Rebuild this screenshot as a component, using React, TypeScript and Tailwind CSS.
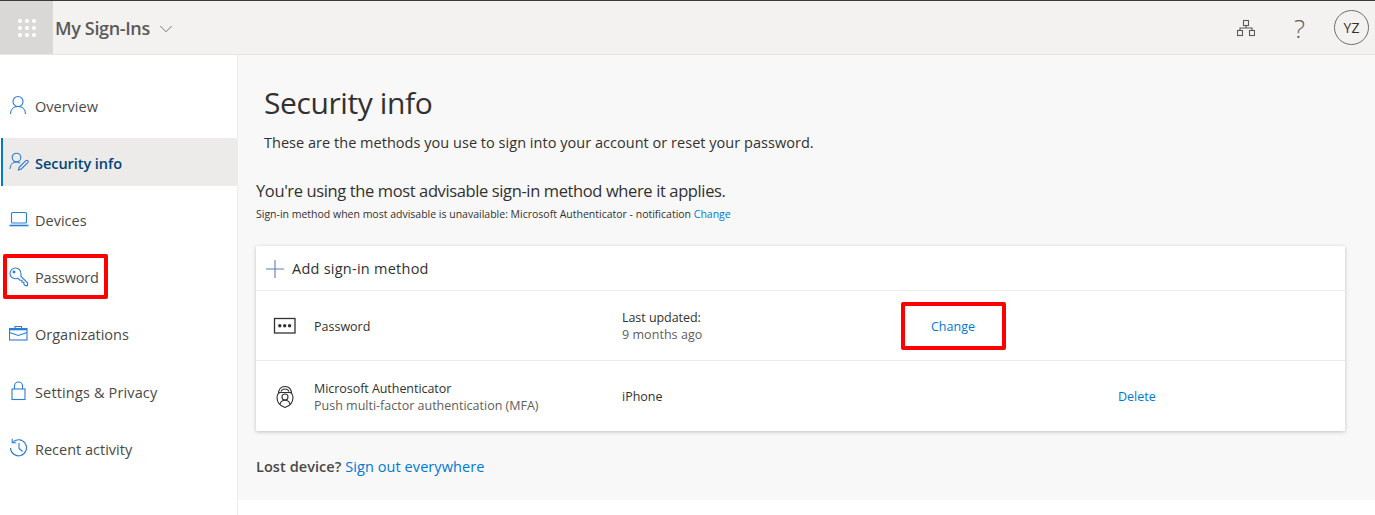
import { ChevronDown } from "lucide-react";
import type { ReactNode } from "react";

const stroke = { fill: "none", stroke: "currentColor", strokeWidth: 1.1 };

function OverviewIcon() {
  return (
    <svg width="20" height="20" viewBox="0 0 20 20" {...stroke}>
      <circle cx="9" cy="6.5" r="5" />
      <path d="M1.5 19c0-4.500 3-7.500 7.500-7.500s7.500 3 7.500 7.500" />
    </svg>
  );
}

function SecurityIcon() {
  return (
    <svg width="20" height="20" viewBox="0 0 20 20" {...stroke}>
      <circle cx="7.500" cy="5.500" r="4.300" />
      <path d="M1 17c0-4 2.500-7 6.500-7 1.500 0 2.700.4 3.700 1.100" />
      <path d="M9.500 18l.8-3 6.500-6.300c.7-.6 1.500-.6 2 0s.5 1.300-.1 1.900L12.300 17z" />
    </svg>
  );
}

function DevicesIcon() {
  return (
    <svg width="20" height="20" viewBox="0 0 20 20" {...stroke}>
      <rect x="2.500" y="3.500" width="15" height="10.500" rx="1" />
      <path d="M.5 16.500h19" strokeWidth="1.600" />
    </svg>
  );
}

function KeyIcon() {
  return (
    <svg width="20" height="20" viewBox="0 0 20 20" {...stroke}>
      <path d="M6.500 1C3.400 1 1 3.400 1 6.400s2.400 5.400 5.500 5.400c1 0 1.700-.2 2.400-.6l2 2h2v2h2v2l1.500 1.400H18.500v-2.800l-6.800-6.600c.3-.7.400-1.200.4-1.800C12.100 3.400 9.600 1 6.500 1z" />
      <circle cx="5" cy="5" r=".9" fill="currentColor" />
    </svg>
  );
}

function OrgIcon() {
  return (
    <svg width="20" height="20" viewBox="0 0 20 20" {...stroke}>
      <rect x=".500" y="4.500" width="17.500" height="11.500" />
      <path d="M6 4.500V2.500h6.500v2" />
      <path d="M.500 8.500l8.750 3 8.750-3" />
      <path d="M.500 5.500h17.500" strokeWidth="1.600" />
    </svg>
  );
}

function LockIcon() {
  return (
    <svg width="20" height="20" viewBox="0 0 20 20" {...stroke}>
      <rect x="3" y="8" width="13" height="10.500" />
      <path d="M5.500 8V5a4 4 0 0 1 8 0v3" />
    </svg>
  );
}

function HistoryIcon() {
  return (
    <svg width="20" height="20" viewBox="0 0 20 20" {...stroke}>
      <path d="M3.500 4.500A8 8 0 1 1 1.500 10" />
      <path d="M3.200 .8v4h4" />
      <path d="M10 5v5.500l3.500 3" />
    </svg>
  );
}

function OrgChartIcon() {
  return (
    <svg width="18" height="18" viewBox="0 0 18 18" fill="none" stroke="#5b5a58" strokeWidth="1.100">
      <rect x="6.500" y="1.500" width="5" height="5" />
      <rect x=".500" y="11.500" width="5" height="5" />
      <rect x="12.500" y="11.500" width="5" height="5" />
      <path d="M9 6.500v2.500M3 11.500V9h12v2.500" />
    </svg>
  );
}

function PlusIcon() {
  return (
    <svg width="18" height="18" viewBox="0 0 18 18" fill="none" stroke="#5f7cb0" strokeWidth="1.100">
      <path d="M9 0v18M0 9h18" />
    </svg>
  );
}

function PasswordIcon() {
  return (
    <svg width="24" height="18" viewBox="0 0 24 18" fill="none">
      <rect x="1.500" y="1.500" width="20.500" height="14.500" stroke="#323130" strokeWidth="1.300" />
      <circle cx="6.800" cy="8.700" r="1.700" fill="#323130" />
      <circle cx="11.700" cy="8.700" r="1.700" fill="#323130" />
      <circle cx="16.600" cy="8.700" r="1.700" fill="#323130" />
    </svg>
  );
}

function AuthenticatorIcon() {
  return (
    <svg width="20" height="24" viewBox="0 0 20 24" fill="none" stroke="#323130" strokeWidth="1.100">
      <path d="M3.500 9C3.500 4 6 1.500 10 1.500S16.500 4 16.500 9" />
      <path d="M6 6.500C6.800 4.800 8.200 4 10 4s3.200.8 4 2.500" />
      <path d="M2 12c0-2 1-3.500 2.500-4.500h11C17 8.500 18 10 18 12c0 5-3 9-8 10.500C5 21 2 17 2 12z" />
      <circle cx="10" cy="12" r="3" />
      <path d="M5 19c.8-2.500 2.700-3.700 5-3.700s4.200 1.200 5 3.700" />
    </svg>
  );
}

function Waffle() {
  return (
    <div className="grid grid-cols-3 gap-[3px]">
      {Array.from({ length: 9 }).map((_, i) => (
        <span key={i} className="size-[4px] rounded-full bg-white" />
      ))}
    </div>
  );
}

const NAV: { label: string; icon: ReactNode; tracking: string; active?: boolean }[] = [
  { label: "Overview", icon: <OverviewIcon />, tracking: "tracking-[0px]" },
  { label: "Security info", icon: <SecurityIcon />, tracking: "tracking-[-0.05px]", active: true },
  { label: "Devices", icon: <DevicesIcon />, tracking: "tracking-[0px]" },
  { label: "Password", icon: <KeyIcon />, tracking: "tracking-[-0.2px]" },
  { label: "Organizations", icon: <OrgIcon />, tracking: "tracking-[0px]" },
  { label: "Settings & Privacy", icon: <LockIcon />, tracking: "tracking-[0.15px]" },
  { label: "Recent activity", icon: <HistoryIcon />, tracking: "tracking-[0px]" },
];

export default function App() {
  return (
    <div className="relative flex h-[515px] w-[1375px] flex-col overflow-hidden bg-white font-['Open_Sans','Noto_Sans',sans-serif] text-[#323130]">
      <header className="flex h-[55px] shrink-0 items-center border-t border-b border-t-[#3b3a39] border-b-[#e6e5e3] bg-[#f3f2f1]">
        <div className="flex h-full w-[53px] items-center justify-center bg-[#d9d8d6]">
          <Waffle />
        </div>
        <span className="ml-[2px] pt-[2px] text-[18px] font-semibold tracking-[-0.35px] text-[#5b5a58]">My Sign-Ins</span>
        <ChevronDown className="ml-[5px] mt-[3px] size-[22px] text-[#605e5c]" strokeWidth={0.9} />
        <div className="ml-auto flex items-center">
          <OrgChartIcon />
          <span className="ml-[39px] text-[26px] font-light leading-none text-[#605e5c]">?</span>
          <div className="mr-[6px] ml-[29px] flex size-[35px] items-center justify-center rounded-full border border-[#6f6e6c] text-[14px] text-[#323130]">
            YZ
          </div>
        </div>
      </header>

      <div className="flex min-h-0 flex-1">
        <nav className="flex w-[238px] shrink-0 flex-col gap-[9.2px] border-r border-[#edebe9] pt-[26px] pl-[1px]">
          {NAV.map((item) => (
            <div
              key={item.label}
              className={
                item.active
                  ? "flex h-[48px] items-center gap-[6px] rounded-r-[2px] border-l-2 border-[#0078d4] bg-[#edebe9] pl-[6px] text-[14.500px] font-semibold text-[#004578]"
                  : "flex h-[48px] items-center gap-[6px] pl-[8px] text-[14.500px] text-[#4a4948]"
              }
            >
              <span className="text-[#2b7cd3]">{item.icon}</span>
              <span className={`pt-[3px] ${item.tracking}`}>{item.label}</span>
            </div>
          ))}
        </nav>

        <main className="flex h-[445px] flex-1 flex-col bg-[#f8f8f8] pr-[30px] pl-[18px]">
          <h1 className="mt-[28px] pl-[8px] text-[30px] leading-[40px] tracking-[-0.4px] text-[#323130]">Security info</h1>
          <p className="mt-[10px] pl-[8px] text-[14.500px] leading-[20px] tracking-[0.03px]">
            These are the methods you use to sign into your account or reset your password.
          </p>
          <p className="mt-[26px] text-[16.500px] leading-[24px] tracking-[-0.38px]">
            You're using the most advisable sign-in method where it applies.
          </p>
          <p className="mt-[3px] text-[10.500px] leading-[16px] tracking-[0px]">
            Sign-in method when most advisable is unavailable: Microsoft Authenticator - notification{" "}
            <span className="text-[#0078d4]">Change</span>
          </p>

          <section className="mt-[24px] flex h-[185px] flex-col bg-white shadow-[0_1px_4px_rgba(0,0,0,0.22)]">
            <div className="flex h-[45px] items-center gap-[8px] border-b border-[#edebe9] pt-[1px] pl-[10px] text-[14.500px] tracking-[0.25px]">
              <PlusIcon />
              Add sign-in method
            </div>
            <div className="flex h-[70px] items-center border-b border-[#edebe9] text-[12.500px]">
              <span className="ml-[17px] w-[41px]"><PasswordIcon /></span>
              <span className="mt-[3px] w-[308px]">Password</span>
              <div className="w-[309px] leading-[17px]">
                <div className="tracking-[-0.05px]">Last updated:</div>
                <div className="tracking-[0.05px] text-[#605e5c]">9 months ago</div>
              </div>
              <span className="mt-[3px] text-[#0078d4]">Change</span>
            </div>
            <div className="flex flex-1 items-center pt-[2px] text-[12.500px]">
              <span className="ml-[19px] w-[39px]"><AuthenticatorIcon /></span>
              <div className="w-[308px] leading-[17px]">
                <div className="tracking-[-0.05px]">Microsoft Authenticator</div>
                <div className="text-[#605e5c]">Push multi-factor authentication (MFA)</div>
              </div>
              <span className="w-[496px]">iPhone</span>
              <span className="text-[#0078d4]">Delete</span>
            </div>
          </section>

          <p className="mt-[26px] text-[14.500px] leading-[20px] tracking-[0.07px]">
            <span className="font-semibold text-[#4a4948]">Lost device?</span>{" "}
            <span className="text-[#0078d4]">Sign out everywhere</span>
          </p>
        </main>
      </div>

      {/* red annotation boxes from the screenshot */}
      <div className="absolute top-[254px] left-[3px] h-[45px] w-[105px] rounded-[2px] border-[4px] border-[#fe0000]" />
      <div className="absolute top-[302px] left-[901px] h-[48px] w-[105px] rounded-[2px] border-[4px] border-[#fe0000]" />
    </div>
  );
}
